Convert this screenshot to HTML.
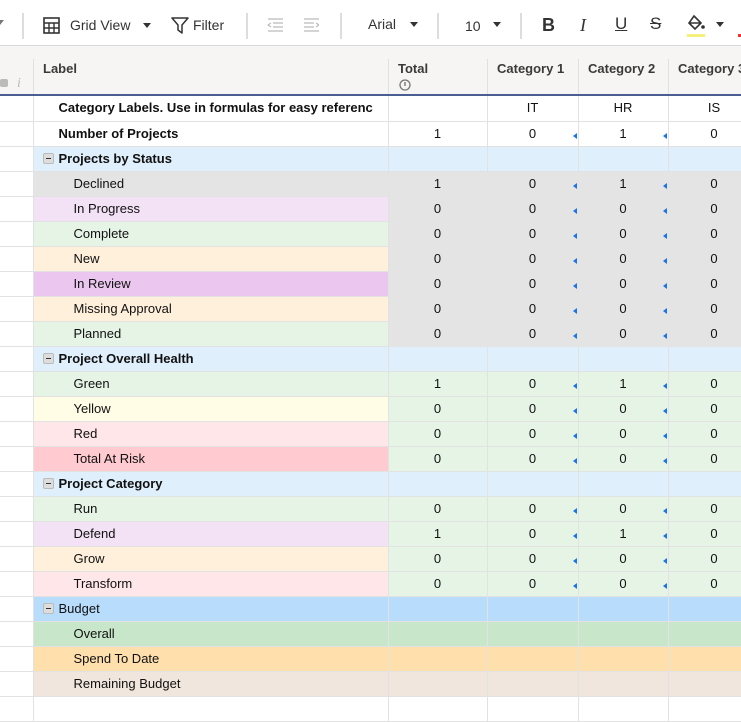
<!DOCTYPE html>
<html><head><meta charset="utf-8"><style>
*{box-sizing:border-box;margin:0;padding:0}
body{width:741px;height:706px;overflow:hidden;background:#fff;font-family:"Liberation Sans",Arial,sans-serif;position:relative;color:#111}
.tb{position:absolute;left:0;top:0;width:741px;height:46px;border-bottom:1px solid #d9d9d9;background:#fff}
.tb .t{position:absolute;top:16px;font-size:15px;color:#333}
.sep{position:absolute;top:13px;width:2px;height:26px;background:#ddd}
.hd{position:absolute;left:0;top:46px;width:741px;height:50px;background:#f6f5f3;border-bottom:2px solid #4a5e93;overflow:hidden}
.hd .c{position:absolute;top:15px;font-size:13px;font-weight:bold;color:#3a3a3a;white-space:nowrap}
.vl{position:absolute;top:13px;width:1px;height:37px;background:#e0e0e0}
table{position:absolute;left:0;top:96px;border-collapse:collapse;table-layout:fixed;width:760px}
td{height:25px;border-bottom:1px solid #e2e2e2;border-right:1px solid #e2e2e2;font-size:13px;text-align:center;position:relative;white-space:nowrap;overflow:hidden;padding:0;line-height:24px}
td.g{background:#fff}
td.l{text-align:left;padding-left:25px}
td.l.s{padding-left:40px}
td.l.b{font-weight:bold}
.mn{display:inline-block;width:11px;height:11px;background:#ddd;border:1px solid #bbb;border-radius:2px;vertical-align:-1px;margin-right:5px;margin-left:-16px;position:relative}
.mn:after{content:"";position:absolute;left:2px;top:4px;width:5px;height:1.5px;background:#333}
.tr:after{content:"";position:absolute;right:1px;top:11px;border-top:3px solid transparent;border-bottom:3px solid transparent;border-right:4px solid #1a73e8}
.gb{background:#dfeffc}
.gr td.n{background:#e4e4e4;border-right-color:#e4e4e4;border-bottom-color:#e4e4e4}
.ge td.n{background:#e6f4e6}
</style></head><body>
<div class="tb">
<div style="position:absolute;left:-4px;top:20px;border-left:4px solid transparent;border-right:4px solid transparent;border-top:5px solid #777"></div>
<div class="sep" style="left:22px"></div>
<svg style="position:absolute;left:43px;top:17px" width="17" height="17" viewBox="0 0 17 17"><rect x="1" y="1" width="15" height="15" fill="none" stroke="#333" stroke-width="1.6"/><path d="M1 6H16M1 11H16M6 6V16M11 6V16" stroke="#333" stroke-width="1.4"/></svg>
<div class="t" style="left:70px;font-size:14px;top:17px">Grid View</div>
<div style="position:absolute;left:143px;top:23px;border-left:4px solid transparent;border-right:4px solid transparent;border-top:5px solid #333"></div>
<svg style="position:absolute;left:171px;top:17px" width="18" height="17" viewBox="0 0 18 17"><path d="M1 1H17L11 8V16L7 13V8Z" fill="none" stroke="#333" stroke-width="1.5" stroke-linejoin="round"/></svg>
<div class="t" style="left:193px;font-size:14px;top:17px">Filter</div>
<div class="sep" style="left:246px"></div>
<svg style="position:absolute;left:267px;top:18px" width="52" height="14"><path d="M1 1H16M6 5H16M6 9H16M1 13H16M4 5L1 7L4 9" fill="none" stroke="#bbb" stroke-width="1.2"/><path d="M37 1H52M37 5H47M37 9H47M37 13H52M49 5L52 7L49 9" fill="none" stroke="#bbb" stroke-width="1.2"/></svg>
<div class="sep" style="left:340px"></div>
<div class="t" style="left:368px;font-size:14px;top:16px">Arial</div>
<div style="position:absolute;left:410px;top:22px;border-left:4px solid transparent;border-right:4px solid transparent;border-top:5px solid #333"></div>
<div class="sep" style="left:437px"></div>
<div class="t" style="left:465px;font-size:14px;top:18px">10</div>
<div style="position:absolute;left:493px;top:22px;border-left:4px solid transparent;border-right:4px solid transparent;border-top:5px solid #333"></div>
<div class="sep" style="left:520px"></div>
<div class="t" style="left:542px;font-weight:bold;font-size:18px;top:15px">B</div>
<div class="t" style="left:580px;font-style:italic;font-size:18px;top:15px;font-family:'Liberation Serif',serif">I</div>
<div class="t" style="left:615px;font-size:17px;top:14px;text-decoration:underline">U</div>
<div class="t" style="left:650px;font-size:17px;top:14px;text-decoration:line-through">S</div>
<svg style="position:absolute;left:686px;top:14px" width="20" height="24"><path d="M8 2L15 9L9 15L3 9Z M3 9H15" fill="none" stroke="#333" stroke-width="1.6"/><circle cx="17" cy="13" r="1.8" fill="#333"/><rect x="1" y="20" width="18" height="3" fill="#f5f07a"/></svg>
<div style="position:absolute;left:716px;top:22px;border-left:4px solid transparent;border-right:4px solid transparent;border-top:5px solid #333"></div>
<div style="position:absolute;left:738px;top:34px;width:3px;height:3px;background:#e33"></div>
</div>
<div class="hd">
<div style="position:absolute;left:0;top:33px;width:8px;height:8px;background:#bbb;border-radius:2px"></div>
<div style="position:absolute;left:17px;top:30px;font-style:italic;font-family:'Liberation Serif',serif;font-size:14px;color:#bbb">i</div>
<div class="vl" style="left:33px"></div>
<div class="c" style="left:43px">Label</div>
<div class="vl" style="left:388px"></div>
<div class="c" style="left:398px">Total</div>
<svg style="position:absolute;left:399px;top:33px" width="12" height="12"><circle cx="6" cy="6" r="5" fill="none" stroke="#777" stroke-width="1.3"/><path d="M6 3V7" stroke="#777" stroke-width="1.4"/></svg>
<div class="vl" style="left:487px"></div>
<div class="c" style="left:497px">Category 1</div>
<div class="vl" style="left:578px"></div>
<div class="c" style="left:588px">Category 2</div>
<div class="vl" style="left:668px"></div>
<div class="c" style="left:678px">Category 3</div>
</div>
<table>
<colgroup><col style="width:33px"><col style="width:355px"><col style="width:99px"><col style="width:91px"><col style="width:90px"><col style="width:92px"></colgroup>
<tr><td class="g"></td><td class="l b">Category Labels. Use in formulas for easy referenc</td><td></td><td>IT</td><td>HR</td><td>IS</td></tr>
<tr><td class="g"></td><td class="l b">Number of Projects</td><td>1</td><td class="tr">0</td><td class="tr">1</td><td>0</td></tr>
<tr class="gb"><td class="g"></td><td class="l b gb"><span class="mn"></span>Projects by Status</td><td></td><td></td><td></td><td></td></tr>
<tr class="gr"><td class="g"></td><td class="l s" style="background:#e4e4e4">Declined</td><td class="n">1</td><td class="n tr">0</td><td class="n tr">1</td><td class="n">0</td></tr>
<tr class="gr"><td class="g"></td><td class="l s" style="background:#f3e1f5">In Progress</td><td class="n">0</td><td class="n tr">0</td><td class="n tr">0</td><td class="n">0</td></tr>
<tr class="gr"><td class="g"></td><td class="l s" style="background:#e6f4e6">Complete</td><td class="n">0</td><td class="n tr">0</td><td class="n tr">0</td><td class="n">0</td></tr>
<tr class="gr"><td class="g"></td><td class="l s" style="background:#fff0dc">New</td><td class="n">0</td><td class="n tr">0</td><td class="n tr">0</td><td class="n">0</td></tr>
<tr class="gr"><td class="g"></td><td class="l s" style="background:#ebc6ee">In Review</td><td class="n">0</td><td class="n tr">0</td><td class="n tr">0</td><td class="n">0</td></tr>
<tr class="gr"><td class="g"></td><td class="l s" style="background:#fff0dc">Missing Approval</td><td class="n">0</td><td class="n tr">0</td><td class="n tr">0</td><td class="n">0</td></tr>
<tr class="gr"><td class="g"></td><td class="l s" style="background:#e6f4e6">Planned</td><td class="n">0</td><td class="n tr">0</td><td class="n tr">0</td><td class="n">0</td></tr>
<tr class="gb"><td class="g"></td><td class="l b gb"><span class="mn"></span>Project Overall Health</td><td></td><td></td><td></td><td></td></tr>
<tr class="ge"><td class="g"></td><td class="l s" style="background:#e6f4e6">Green</td><td class="n">1</td><td class="n tr">0</td><td class="n tr">1</td><td class="n">0</td></tr>
<tr class="ge"><td class="g"></td><td class="l s" style="background:#fffde6">Yellow</td><td class="n">0</td><td class="n tr">0</td><td class="n tr">0</td><td class="n">0</td></tr>
<tr class="ge"><td class="g"></td><td class="l s" style="background:#ffe6e8">Red</td><td class="n">0</td><td class="n tr">0</td><td class="n tr">0</td><td class="n">0</td></tr>
<tr class="ge"><td class="g"></td><td class="l s" style="background:#ffcad0">Total At Risk</td><td class="n">0</td><td class="n tr">0</td><td class="n tr">0</td><td class="n">0</td></tr>
<tr class="gb"><td class="g"></td><td class="l b gb"><span class="mn"></span>Project Category</td><td></td><td></td><td></td><td></td></tr>
<tr class="ge"><td class="g"></td><td class="l s" style="background:#e6f4e6">Run</td><td class="n">0</td><td class="n tr">0</td><td class="n tr">0</td><td class="n">0</td></tr>
<tr class="ge"><td class="g"></td><td class="l s" style="background:#f3e1f5">Defend</td><td class="n">1</td><td class="n tr">0</td><td class="n tr">1</td><td class="n">0</td></tr>
<tr class="ge"><td class="g"></td><td class="l s" style="background:#fff0dc">Grow</td><td class="n">0</td><td class="n tr">0</td><td class="n tr">0</td><td class="n">0</td></tr>
<tr class="ge"><td class="g"></td><td class="l s" style="background:#ffe6e8">Transform</td><td class="n">0</td><td class="n tr">0</td><td class="n tr">0</td><td class="n">0</td></tr>
<tr style="background:#b8dcfc"><td class="g"></td><td class="l"><span class="mn"></span>Budget</td><td></td><td></td><td></td><td></td></tr>
<tr style="background:#c8e6c9"><td class="g"></td><td class="l s">Overall</td><td></td><td></td><td></td><td></td></tr>
<tr style="background:#ffe0ad"><td class="g"></td><td class="l s">Spend To Date</td><td></td><td></td><td></td><td></td></tr>
<tr style="background:#f0e6dd"><td class="g"></td><td class="l s">Remaining Budget</td><td></td><td></td><td></td><td></td></tr>
<tr><td class="g"></td><td></td><td></td><td></td><td></td><td></td></tr>
</table>
</body></html>
